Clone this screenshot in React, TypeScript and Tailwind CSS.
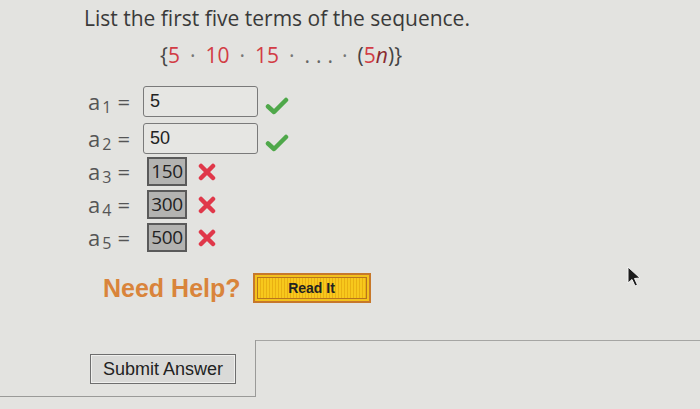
import React from 'react';

const Check: React.FC = () => (
    <svg width="24" height="18" viewBox="0 0 24 18" className="shrink-0">
        <path d="M3 9.5 L9 15 L21 3" fill="none" stroke="#4fa84a" strokeWidth="4.5" strokeLinecap="round" strokeLinejoin="round" />
    </svg>
);

const Cross: React.FC = () => (
    <svg width="20" height="18" viewBox="0 0 20 18" className="shrink-0">
        <path d="M4 3 L16 15 M16 3 L4 15" fill="none" stroke="#e0384a" strokeWidth="4.5" strokeLinecap="round" />
    </svg>
);

const Label: React.FC<{ n: number; w: string }> = ({ n, w }) => (
    <div className={`flex items-start text-[#555] text-[22px] leading-none ${w}`} style={{ fontFamily: '"Open Sans", sans-serif' }}>
        <span className="mt-[1px]">a</span>
        <span className="text-[16px] mt-[10px] ml-[2px]">{n}</span>
        <span className="ml-[6px] mt-[1px]">=</span>
    </div>
);

export default function App() {
    const big = [
        { n: 1, v: '5', mt: 'mt-[17px]' },
        { n: 2, v: '50', mt: 'mt-[6px]' },
    ];
    const small = [
        { n: 3, v: '150', mt: 'mt-[3px]' },
        { n: 4, v: '300', mt: 'mt-[4px]' },
        { n: 5, v: '500', mt: 'mt-[4px]' },
    ];

    return (
        <div className="relative w-[700px] h-[409px] overflow-hidden bg-[#e3e3e0] text-[#333]" style={{ fontFamily: '"Open Sans", sans-serif' }}>
            {/* question */}
            <div className="pl-[84px] pt-[4px] text-[21px] leading-[28px] text-[#3a3a3a]">
                List the first five terms of the sequence.
            </div>
            <div className="pl-[160px] mt-[9px] text-[21px] leading-[28px] text-[#444]">
                {'{'}<span className="text-[#d23c45]">5</span>
                <span className="text-[#777] px-[10px]">·</span>
                <span className="text-[#d23c45]">10</span>
                <span className="text-[#777] px-[10px]">·</span>
                <span className="text-[#d23c45]">15</span>
                <span className="text-[#777] px-[10px]">·</span>
                <span className="text-[#666] tracking-[6px]">...</span>
                <span className="text-[#777] pl-[3px] pr-[10px]">·</span>
                (<span className="text-[#d23c45]">5</span><span className="italic text-[#8a2a30]">n</span>){'}'}
            </div>

            {/* answers */}
            <div className="pl-[88px]">
                {big.map((r) => (
                    <div key={r.n} className={`flex items-center ${r.mt}`}>
                        <Label n={r.n} w="w-[55px]" />
                        <div className="w-[115px] h-[31px] border border-[#7a7a7a] rounded-[3px] bg-[#e6e6e3] flex items-center pl-[6px] text-[18px] text-[#222]" style={{ fontFamily: '"Liberation Sans", Arial, sans-serif' }}>
                            {r.v}
                        </div>
                        <div className="ml-[7px] mt-[8px]"><Check /></div>
                    </div>
                ))}
                {small.map((r) => (
                    <div key={r.n} className={`flex items-center ${r.mt}`}>
                        <Label n={r.n} w="w-[59px]" />
                        <div className="w-[40px] h-[29px] border-2 border-[#5a5a5a] bg-[#b3b3b1] flex items-center justify-center text-[19px] tracking-[-0.3px] text-[#222]" style={{ fontFamily: '"Open Sans", sans-serif' }}>
                            {r.v}
                        </div>
                        <div className="ml-[10px]"><Cross /></div>
                    </div>
                ))}
            </div>

            {/* help */}
            <div className="flex items-center pl-[103px] mt-[21px]">
                <span className="text-[25px] font-bold text-[#d9843b] leading-none" style={{ fontFamily: '"Liberation Sans", Arial, sans-serif' }}>
                    Need Help?
                </span>
                <div className="ml-[12px] w-[118px] h-[30px] border-2 border-[#c7782a] p-[2px] bg-[#f3c21c]">
                    <div className="w-full h-full border border-[#b8741e] flex items-center justify-center bg-[repeating-linear-gradient(90deg,#f7c81c_0px,#f7c81c_2px,#e9b012_2px,#e9b012_3px)]">
                        <span className="text-[14px] font-bold text-[#222]" style={{ fontFamily: '"Liberation Sans", Arial, sans-serif' }}>Read It</span>
                    </div>
                </div>
            </div>

            {/* bottom */}
            <div className="flex mt-[37px] h-[57px]">
                <div className="w-[256px] border-b border-r border-[#9a9a98] flex items-center pl-[90px]">
                    <button className="w-[146px] h-[30px] mt-[2px] border border-[#6e6e6e] bg-[#dadad8] shadow-[inset_0_0_0_1px_#f0f0ee] text-[18px] text-[#222]" style={{ fontFamily: '"Liberation Sans", Arial, sans-serif' }}>
                        Submit Answer
                    </button>
                </div>
                <div className="flex-1 border-t border-[#a5a5a3]" />
            </div>

            {/* mouse cursor */}
            <svg className="absolute left-[626px] top-[266px]" width="16" height="22" viewBox="0 0 16 22">
                <path d="M2 1 L2 17 L6 13.5 L9 20 L11.5 19 L8.5 12.5 L14 12 Z" fill="#1c1c1c" stroke="#f4f4f4" strokeWidth="1" />
            </svg>
        </div>
    );
}
